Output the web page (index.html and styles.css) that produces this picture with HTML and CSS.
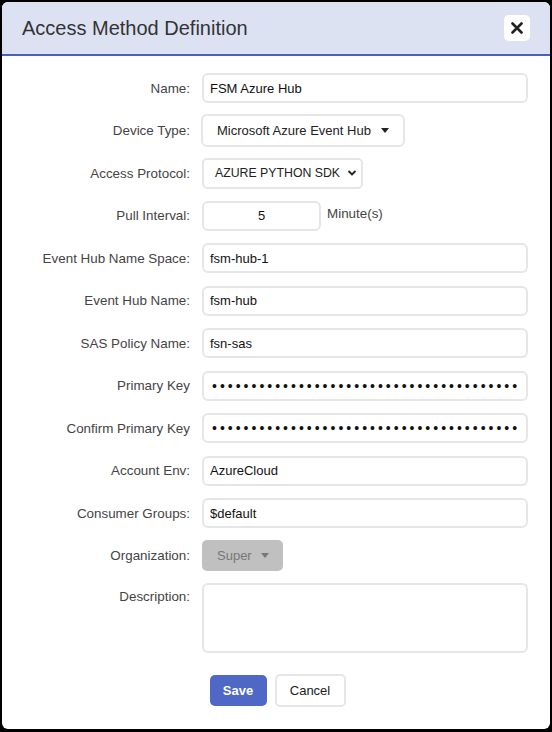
FILE: index.html
```html
<!DOCTYPE html>
<html lang="en">
<head>
    <meta charset="UTF-8">
    <meta name="viewport" content="width=device-width, initial-scale=1.0">
    <title>Access Method Definition</title>
<link rel="stylesheet" href="styles.css">
</head>
<body>
    <div class="dialog">
        <div class="head">
            <span class="title">Access Method Definition</span>
            <button class="close">
                <svg width="12" height="12" viewBox="0 0 12 12"><path d="M1.5 1.5L10.5 10.5M10.5 1.5L1.5 10.5" stroke="#222" stroke-width="2.6" stroke-linecap="round"/></svg>
            </button>
        </div>
        <div class="form">
            <div class="row">
                <label>Name:</label>
                <input class="text" type="text" value="FSM Azure Hub">
            </div>
            <div class="row">
                <label>Device Type:</label>
                <div class="drop">Microsoft Azure Event Hub <span class="caret"></span></div>
            </div>
            <div class="row">
                <label>Access Protocol:</label>
                <div class="select"><span>AZURE PYTHON SDK</span>
                    <svg width="10" height="8" viewBox="0 0 10 8"><path d="M1.5 2L5 5.5L8.5 2" stroke="#222" stroke-width="1.8" fill="none"/></svg>
                </div>
            </div>
            <div class="row">
                <label>Pull Interval:</label>
                <input class="text num" type="text" value="5">
                <span class="unit">Minute(s)</span>
            </div>
            <div class="row">
                <label>Event Hub Name Space:</label>
                <input class="text" type="text" value="fsm-hub-1">
            </div>
            <div class="row">
                <label>Event Hub Name:</label>
                <input class="text" type="text" value="fsm-hub">
            </div>
            <div class="row">
                <label>SAS Policy Name:</label>
                <input class="text" type="text" value="fsn-sas">
            </div>
            <div class="row">
                <label>Primary Key</label>
                <input class="text pass" type="password" value="aaaaaaaaaaaaaaaaaaaaaaaaaaaaaaaaaaaaaaaaaaaaaaaaaa">
            </div>
            <div class="row">
                <label>Confirm Primary Key</label>
                <input class="text pass" type="password" value="aaaaaaaaaaaaaaaaaaaaaaaaaaaaaaaaaaaaaaaaaaaaaaaaaa">
            </div>
            <div class="row">
                <label>Account Env:</label>
                <input class="text" type="text" value="AzureCloud">
            </div>
            <div class="row">
                <label>Consumer Groups:</label>
                <input class="text" type="text" value="$default">
            </div>
            <div class="row">
                <label>Organization:</label>
                <div class="drop off">Super <span class="caret"></span></div>
            </div>
            <div class="row top">
                <label>Description:</label>
                <textarea class="area"></textarea>
            </div>
        </div>
        <div class="actions">
            <button class="btn save">Save</button>
            <button class="btn cancel">Cancel</button>
        </div>
    </div>
</body>
</html>
```

FILE: styles.css
```css
body{
    margin: 0;
    background: #000;
}
.dialog{
    width: 548px;
    height: 727px;
    margin: 2px 2px 3px 2px;
    background: #fff;
    border-radius: 6px;
    overflow: hidden;
    font-family: "Liberation Sans", Arial, sans-serif;
}
.head{
    height: 52px;
    background: #dde2f3;
    border-bottom: 2px solid #4a62bc;
    display: flex;
    align-items: center;
    justify-content: space-between;
    padding: 0 20px 0 20px;
}
.title{
    font-size: 20px;
    color: #333;
}
.close{
    width: 26px;
    height: 26px;
    border: none;
    border-radius: 5px;
    background: #fff;
    display: flex;
    align-items: center;
    justify-content: center;
    padding: 0;
}
.form{
    padding: 10.75px 22px 0 0;
}
.row{
    height: 42.5px;
    display: flex;
    align-items: center;
}
.row label{
    width: 188px;
    margin-right: 12px;
    text-align: right;
    font-size: 13.4px;
    color: #444;
    flex: none;
}
.text{
    box-sizing: border-box;
    width: 326px;
    height: 30px;
    border: 2px solid #e6e6e6;
    border-radius: 6px;
    padding: 0 6px;
    font-family: "Liberation Sans", Arial, sans-serif;
    font-size: 13px;
    color: #111;
    outline: none;
}
.num{
    width: 119px;
    text-align: center;
}
.pass{
    font-size: 14px;
    letter-spacing: 3px;
    padding-left: 8px;
}
.unit{
    font-size: 13.4px;
    color: #444;
    margin: 0 0 4px 6px;
}
.drop{
    box-sizing: border-box;
    height: 33px;
    padding: 0 14px;
    border: 2px solid #e6e6e6;
    border-radius: 6px;
    display: flex;
    align-items: center;
    font-size: 13px;
    color: #222;
    margin-left: -1px;
    white-space: nowrap;
}
.caret{
    width: 0;
    height: 0;
    border-left: 4px solid transparent;
    border-right: 4px solid transparent;
    border-top: 5px solid #222;
    margin-left: 10px;
}
.drop.off{
    height: 31px;
    margin-left: 0;
    border: none;
    background: #c0c0c0;
    color: #777;
    border-radius: 5px;
    padding: 0 14px 0 15px;
}
.drop.off .caret{
    border-top-color: #777;
    margin-left: 9px;
}
.select{
    box-sizing: border-box;
    height: 31px;
    width: 161px;
    flex: none;
    padding: 0 0 0 11px;
    border: 2px solid #e6e6e6;
    border-radius: 5px;
    display: flex;
    align-items: center;
    font-size: 12.3px;
    color: #222;
    white-space: nowrap;
}
.select svg{
    margin-left: 7px;
}
.row.top{
    height: auto;
    align-items: flex-start;
    padding-top: 6px;
}
.row.top label{
    margin-top: 6px;
}
.area{
    box-sizing: border-box;
    width: 326px;
    height: 70px;
    border: 2px solid #e6e6e6;
    border-radius: 6px;
    resize: none;
    outline: none;
}
.actions{
    display: flex;
    justify-content: center;
    align-items: center;
    gap: 8px;
    padding-top: 21px;
    padding-left: 3px;
}
.btn{
    font-family: "Liberation Sans", Arial, sans-serif;
    font-size: 13px;
    border-radius: 5px;
    cursor: pointer;
}
.save{
    width: 57px;
    height: 31px;
    border: none;
    background: #4f67c5;
    color: #fff;
    font-weight: bold;
}
.cancel{
    width: 71px;
    height: 33px;
    background: #fff;
    border: 2px solid #e6e6e6;
    color: #222;
}
```
